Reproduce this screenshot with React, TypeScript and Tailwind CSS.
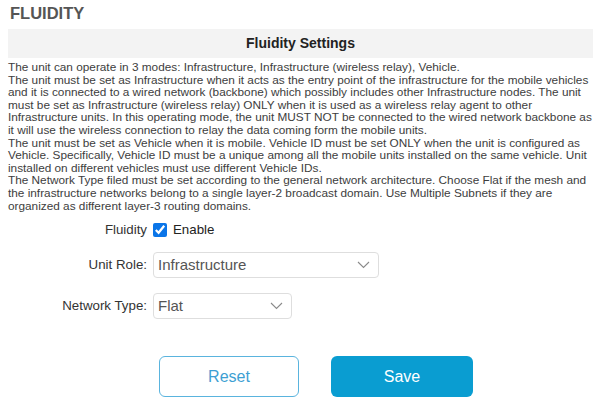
const LINES = [
  "The unit can operate in 3 modes: Infrastructure, Infrastructure (wireless relay), Vehicle.",
  "The unit must be set as Infrastructure when it acts as the entry point of the infrastructure for the mobile vehicles",
  "and it is connected to a wired network (backbone) which possibly includes other Infrastructure nodes. The unit",
  "must be set as Infrastructure (wireless relay) ONLY when it is used as a wireless relay agent to other",
  "Infrastructure units. In this operating mode, the unit MUST NOT be connected to the wired network backbone as",
  "it will use the wireless connection to relay the data coming form the mobile units.",
  "The unit must be set as Vehicle when it is mobile. Vehicle ID must be set ONLY when the unit is configured as",
  "Vehicle. Specifically, Vehicle ID must be a unique among all the mobile units installed on the same vehicle. Unit",
  "installed on different vehicles must use different Vehicle IDs.",
  "The Network Type filed must be set according to the general network architecture. Choose Flat if the mesh and",
  "the infrastructure networks belong to a single layer-2 broadcast domain. Use Multiple Subnets if they are",
  "organized as different layer-3 routing domains.",
];

export default function App() {
  return (
    <div className="w-[594px] h-[403px] bg-white overflow-hidden font-['Liberation_Sans',Arial,sans-serif]">
      {/* Title */}
      <h1 className="pl-[10px] pt-[3px] text-[16.5px] leading-[20px] font-bold text-[#555]">FLUIDITY</h1>

      {/* Section header */}
      <div className="mt-[6px] ml-[8px] mr-[1px] h-[29px] bg-[#f3f3f3] flex items-center justify-center text-[14px] font-bold text-[#222]">
        Fluidity Settings
      </div>

      {/* Help text */}
      <div className="mt-[3px] pl-[8px] text-[11.8px] leading-[12.6px] text-[#3d3d3d]">
        {LINES.map((l, i) => (
          <div key={i} className="whitespace-nowrap">{l}</div>
        ))}
      </div>

      {/* Form */}
      <div className="flex flex-col">
        <Row label="Fluidity" className="mt-[8px] h-[20px]">
          <label className="flex items-center gap-[6px] text-[13.3px] text-[#222]">
            <input type="checkbox" defaultChecked className="m-0 w-[14px] h-[14px] accent-[#0a75e8]" />
            Enable
          </label>
        </Row>
        <Row label="Unit Role:" className="mt-[12px] h-[26px]">
          <Select value="Infrastructure" width="w-[226px]" />
        </Row>
        <Row label="Network Type:" className="mt-[15px] h-[26px]">
          <Select value="Flat" width="w-[139px]" />
        </Row>
      </div>

      {/* Buttons */}
      <div className="mt-[37px] pl-[159px] flex gap-[32px]">
        <button className="w-[140px] h-[41px] rounded-[6px] border border-[#5ab4de] bg-white text-[16px] text-[#3d9fd3]">
          Reset
        </button>
        <button className="w-[142px] h-[41px] rounded-[6px] bg-[#0a9dd1] text-[16px] text-white">
          Save
        </button>
      </div>
    </div>
  );
}

function Row({ label, className, children }: { label: string; className: string; children: React.ReactNode }) {
  return (
    <div className={`flex items-center ${className}`}>
      <span className="w-[147px] text-right text-[13.3px] text-[#333]">{label}</span>
      <div className="ml-[6px] flex items-center">{children}</div>
    </div>
  );
}

function Select({ value, width }: { value: string; width: string }) {
  return (
    <div className={`${width} h-[26px] border border-[#dedede] rounded-[4px] flex items-center justify-between pl-[4px] pr-[8px] bg-white`}>
      <span className="text-[15px] text-[#555]">{value}</span>
      <svg width="13" height="8" viewBox="0 0 13 8" fill="none">
        <polyline points="1,1 6.5,6.5 12,1" stroke="#8a8a8a" strokeWidth="1.1" />
      </svg>
    </div>
  );
}
